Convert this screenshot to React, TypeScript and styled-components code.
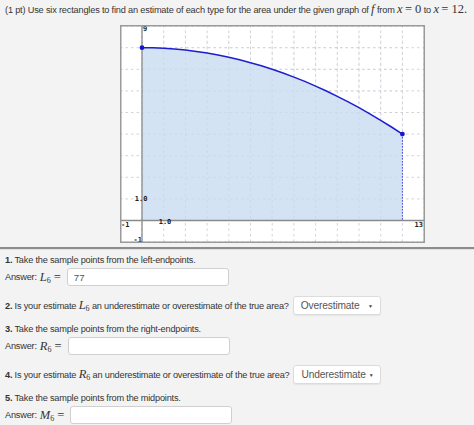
import styled, { createGlobalStyle } from "styled-components";

const GlobalStyle = createGlobalStyle`
  html, body {
    margin: 0;
    padding: 0;
    background: #f3f3f3;
  }
  body {
    font-family: "Liberation Sans", Arial, sans-serif;
    color: #333;
  }
`;

const Page = styled.div`
  width: 474px;
  height: 425px;
  overflow: hidden;
  padding-top: 1px;
  box-sizing: border-box;
`;

const Intro = styled.div`
  font-size: 9.2px;
  letter-spacing: -0.18px;
  line-height: 16px;
  padding-left: 5px;
  white-space: nowrap;
`;

const M = styled.span`
  font-family: "Liberation Serif", "Times New Roman", serif;
  font-size: 12.5px;
  letter-spacing: 0;
`;

const Var = styled(M)`
  font-style: italic;
`;

const Sub = styled.sub`
  font-family: "Liberation Serif", serif;
  font-size: 8px;
  font-style: normal;
  vertical-align: -2px;
  line-height: 0;
`;

const GraphWrap = styled.div`
  margin: 7px 0 0 120px;
  height: 218px;
`;

const Rule = styled.div`
  margin-top: 4px;
  height: 2px;
  background: #8c8c8c;
  border-bottom: 1px solid #e2e2e2;
`;

const Questions = styled.div`
  padding: 2px 0 0 5px;
  font-size: 9.2px;
  letter-spacing: -0.2px;
  white-space: nowrap;
`;

const Part = styled.div<{ $gap: number }>`
  margin-bottom: ${(p) => p.$gap}px;
`;

const QText = styled.div`
  line-height: 16px;
  height: 16px;
`;

const Num = styled.b`
  font-weight: bold;
`;

const AnswerRow = styled.div`
  display: flex;
  align-items: center;
  height: 18px;
`;

const Eq = styled.span`
  margin-right: 6px;
  display: inline-flex;
  align-items: center;
  gap: 3px;
`;

const Field = styled.input`
  box-sizing: border-box;
  width: 162px;
  height: 18px;
  border: 1px solid #d0d0d0;
  border-radius: 3px;
  background: #fff;
  font-family: "Liberation Sans", Arial, sans-serif;
  font-size: 9.6px;
  color: #555;
  padding: 0 6px;
  outline: none;
`;

const SelectRow = styled.div`
  display: flex;
  align-items: center;
  height: 19px;
`;

const SelectBox = styled.div`
  box-sizing: border-box;
  margin-left: 4px;
  width: 88px;
  height: 19px;
  border: 1px solid #dcdcdc;
  border-radius: 3px;
  background: #fff;
  box-shadow: 0 1px 1px rgba(0, 0, 0, 0.06);
  display: flex;
  align-items: center;
  justify-content: space-between;
  padding: 0 7px 0 7px;
  font-size: 10.2px;
  letter-spacing: -0.15px;
  color: #555;
`;

const Caret = styled.span`
  font-size: 5px;
  color: #444;
`;

const W = 305;
const H = 218;
const OX = 22;
const OY = 195.5;
const UX = 21.7;
const UY = 21.6;
const X = (x: number) => OX + x * UX;
const Y = (y: number) => OY - y * UY;
const f = (x: number) => 8 - (x * x) / 36;

function Graph() {
  const pts: string[] = [];
  for (let i = 0; i <= 24; i++) {
    const x = i / 2;
    pts.push(`${X(x).toFixed(1)},${Y(f(x)).toFixed(1)}`);
  }
  const fill = `M${X(0)},${Y(0)} L${pts.join(" L")} L${X(12)},${Y(0)} Z`;
  const xs = Array.from({ length: 15 }, (_, i) => i - 1);
  const ys = Array.from({ length: 11 }, (_, i) => i - 1);
  const label = {
    fontFamily: "'DejaVu Sans Mono', monospace",
    fontWeight: 700,
    fontSize: 7,
    fill: "#222",
  } as const;

  return (
    <svg width={W} height={H} viewBox={`0 0 ${W} ${H}`}>
      <rect x={0} y={0} width={W} height={H} fill="#fff" />
      {xs.map((x) => (
        <line key={`gx${x}`} x1={X(x)} y1={0} x2={X(x)} y2={H} stroke="#c8c8c8" strokeWidth={0.8} strokeDasharray="2.5 3" />
      ))}
      {ys.map((y) => (
        <line key={`gy${y}`} x1={0} y1={Y(y)} x2={W} y2={Y(y)} stroke="#c8c8c8" strokeWidth={0.8} strokeDasharray="2.5 3" />
      ))}
      <path d={fill} fill="#d4e3f4" />
      {xs.map((x) => (
        <line key={`hx${x}`} x1={X(x)} y1={Y(8.6)} x2={X(x)} y2={Y(0)} stroke="#c0cfe0" strokeWidth={0.8} strokeDasharray="2.5 3" opacity={0.6} />
      ))}
      {ys.map((y) => (
        <line key={`hy${y}`} x1={X(0)} y1={Y(y)} x2={X(12)} y2={Y(y)} stroke="#c0cfe0" strokeWidth={0.8} strokeDasharray="2.5 3" opacity={0.5} />
      ))}
      <line x1={0} y1={Y(0)} x2={W} y2={Y(0)} stroke="#8a8a8a" strokeWidth={1.3} />
      <line x1={X(0)} y1={0} x2={X(0)} y2={H} stroke="#8a8a8a" strokeWidth={1.3} />
      <line x1={X(12)} y1={Y(f(12))} x2={X(12)} y2={Y(0)} stroke="#3a3ae0" strokeWidth={1} strokeDasharray="1.5 1.5" />
      <polyline points={pts.join(" ")} fill="none" stroke="#1d1dcf" strokeWidth={1.5} />
      <circle cx={X(0)} cy={Y(8)} r={2.4} fill="#1515d0" />
      <circle cx={X(12)} cy={Y(4)} r={2.4} fill="#1515d0" />
      <text x={X(0) + 1} y={6} {...label}>9</text>
      <text x={X(0) + 5.5} y={Y(1) + 2.5} textAnchor="end" {...label}>1.0</text>
      <text x={X(1) - 5} y={Y(0) + 3} {...label}>1.0</text>
      <text x={1} y={Y(0) + 6} {...label}>-1</text>
      <text x={X(0) - 8.5} y={H - 1} {...label}>-1</text>
      <text x={W - 2} y={Y(0) + 6} textAnchor="end" {...label}>13</text>
      <rect x={0.75} y={0.75} width={W - 1.5} height={H - 1.5} fill="none" stroke="#9a9a9a" strokeWidth={1.5} />
    </svg>
  );
}

function L6({ v }: { v: string }) {
  return (
    <Var>
      {v}
      <Sub>6</Sub>
    </Var>
  );
}

export default function App() {
  return (
    <Page>
      <GlobalStyle />
      <Intro>
        (1 pt) Use six rectangles to find an estimate of each type for the area under the given graph of{" "}
        <Var>f</Var> from <Var>x</Var> <M>= 0</M> to <Var>x</Var> <M>= 12.</M>
      </Intro>
      <GraphWrap>
        <Graph />
      </GraphWrap>
      <Rule />
      <Questions>
        <Part $gap={10}>
          <QText>
            <Num>1.</Num> Take the sample points from the left-endpoints.
          </QText>
          <AnswerRow>
            <Eq>
              Answer: <L6 v="L" /> <M>=</M>
            </Eq>
            <Field readOnly defaultValue="77" />
          </AnswerRow>
        </Part>
        <Part $gap={6}>
          <SelectRow>
            <span>
              <Num>2.</Num> Is your estimate <L6 v="L" /> an underestimate or overestimate of the true area?
            </span>
            <SelectBox>
              Overestimate <Caret>▼</Caret>
            </SelectBox>
          </SelectRow>
        </Part>
        <Part $gap={10}>
          <QText>
            <Num>3.</Num> Take the sample points from the right-endpoints.
          </QText>
          <AnswerRow>
            <Eq>
              Answer: <L6 v="R" /> <M>=</M>
            </Eq>
            <Field readOnly defaultValue="" />
          </AnswerRow>
        </Part>
        <Part $gap={6}>
          <SelectRow>
            <span>
              <Num>4.</Num> Is your estimate <L6 v="R" /> an underestimate or overestimate of the true area?
            </span>
            <SelectBox>
              Underestimate <Caret>▼</Caret>
            </SelectBox>
          </SelectRow>
        </Part>
        <Part $gap={0}>
          <QText>
            <Num>5.</Num> Take the sample points from the midpoints.
          </QText>
          <AnswerRow>
            <Eq>
              Answer: <L6 v="M" /> <M>=</M>
            </Eq>
            <Field readOnly defaultValue="" />
          </AnswerRow>
        </Part>
      </Questions>
    </Page>
  );
}
